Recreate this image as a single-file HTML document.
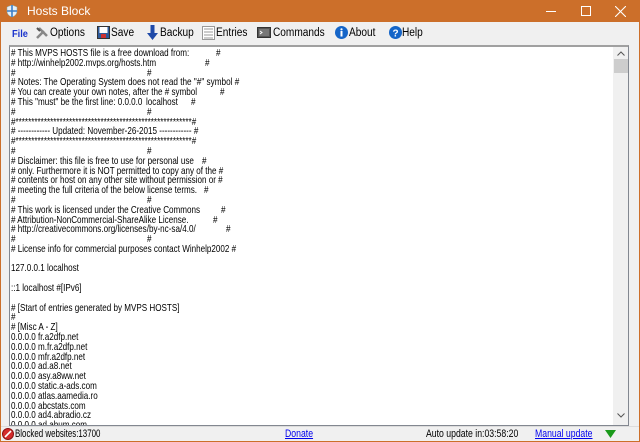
<!DOCTYPE html>
<html><head><meta charset="utf-8"><style>
*{margin:0;padding:0;box-sizing:border-box}
body{width:640px;height:442px;overflow:hidden;background:#f0f0f0;font-family:"Liberation Sans",Arial,sans-serif;position:relative}
.abs{position:absolute}
#title{left:0;top:0;width:640px;height:22px;background:#cc6f2a}
#frame{left:0;top:22px;width:640px;height:420px;border-left:1px solid #cc6f2a;border-right:1px solid #cc6f2a;border-bottom:1px solid #cc6f2a}
.menu{top:26px;font-size:11.5px;color:#000;line-height:14px;transform:scaleX(0.88);transform-origin:0 0;white-space:nowrap}
#ta{left:9px;top:45px;width:620px;height:381px;background:#fff;border:1px solid #828790;border-top:2px solid #a0a0a0;overflow:hidden}
.ln{position:absolute;left:1px;font-size:10.5px;line-height:10px;white-space:pre;transform:scaleX(0.77);transform-origin:0 0;color:#000}
.h{position:absolute;font-size:10.5px;line-height:10px;white-space:pre;transform:scaleX(0.77);transform-origin:0 0}
#sb{left:603px;top:0;width:16px;height:379px;background:#f0f0f0}
.st{top:428px;font-size:11px;line-height:13px;transform:scaleX(0.79);transform-origin:0 0;white-space:nowrap}
</style></head><body>
<div id="title" class="abs">
 <svg class="abs" style="left:5px;top:4px" width="14" height="14" viewBox="0 0 14 14"><path d="M7 1 L12 3 V7 C12 10 10 12 7 13 C4 12 2 10 2 7 V3 Z" fill="#e8eef5" stroke="#8aa" stroke-width=".5"/><path d="M7 1 V13 M2 7 H12" stroke="#3a7fc8" stroke-width="1.6"/></svg>
 <div class="abs" style="left:27px;top:4px;color:#fff;font-size:12px">Hosts Block</div>
 <div class="abs" style="left:546px;top:11px;width:10px;height:1px;background:#fff"></div>
 <div class="abs" style="left:581px;top:6px;width:10px;height:10px;border:1px solid #fff"></div>
 <svg class="abs" style="left:615px;top:6px" width="11" height="11"><path d="M0 0L11 11M11 0L0 11" stroke="#fff" stroke-width="1.1"/></svg>
</div>
<div id="frame" class="abs"></div>
<div class="abs menu" style="left:12px;color:#1a33cc;font-weight:bold;font-size:10.5px;top:27px">File</div>
<svg class="abs" style="left:35px;top:26px" width="14" height="14"><path d="M2 12L9 5M4 2L12 10" stroke="#888" stroke-width="2.5"/><path d="M2 2L5 5" stroke="#555" stroke-width="2"/></svg>
<div class="abs menu" style="left:50px">Options</div>
<svg class="abs" style="left:97px;top:26px" width="13" height="13"><rect x=".5" y=".5" width="12" height="12" fill="#2d5b9c" stroke="#333"/><rect x="2.5" y="1" width="8" height="6" fill="#fff"/><rect x="4" y="8" width="5" height="4" fill="#c33"/></svg>
<div class="abs menu" style="left:111px">Save</div>
<svg class="abs" style="left:147px;top:25px" width="11" height="15"><rect x="3.5" y="0" width="4" height="9" fill="#1f4aa8"/><path d="M0 8H11L5.5 15Z" fill="#1f4aa8"/></svg>
<div class="abs menu" style="left:160px">Backup</div>
<svg class="abs" style="left:202px;top:26px" width="13" height="14"><rect x=".5" y=".5" width="12" height="13" fill="#fff" stroke="#999"/><path d="M2 3H11M2 6H11M2 9H11M2 12H11" stroke="#999"/></svg>
<div class="abs menu" style="left:216px">Entries</div>
<svg class="abs" style="left:257px;top:27px" width="14" height="11"><rect x=".5" y=".5" width="13" height="10" fill="#555" stroke="#333"/><rect x="2" y="2" width="10" height="7" fill="#777"/><path d="M3 4l2 1.5L3 7" stroke="#fff" fill="none"/></svg>
<div class="abs menu" style="left:273px">Commands</div>
<svg class="abs" style="left:335px;top:26px" width="13" height="13"><circle cx="6.5" cy="6.5" r="6.5" fill="#1565c8"/><rect x="5.5" y="5" width="2" height="5.5" fill="#fff"/><circle cx="6.5" cy="3.3" r="1.1" fill="#fff"/></svg>
<div class="abs menu" style="left:349px">About</div>
<svg class="abs" style="left:389px;top:26px" width="13" height="13"><circle cx="6.5" cy="6.5" r="6.5" fill="#1565c8"/><text x="6.5" y="10.5" font-size="10" font-weight="bold" fill="#fff" text-anchor="middle" font-family="Liberation Sans">?</text></svg>
<div class="abs menu" style="left:402px">Help</div>

<div id="ta" class="abs">
<div id="sb" class="abs">
 <svg class="abs" style="left:4px;top:4px" width="8" height="5"><path d="M0.5 4.5L4 1L7.5 4.5" stroke="#555" fill="none"/></svg>
 <div class="abs" style="left:1px;top:12px;width:14px;height:14px;background:#cdcdcd"></div>
 <svg class="abs" style="left:4px;top:366px" width="8" height="5"><path d="M0.5 0.5L4 4L7.5 0.5" stroke="#555" fill="none"/></svg>
</div>
<div class="ln" style="top:1px"># This MVPS HOSTS file is a free download from:</div><div class="h" style="left:206px;top:1px">#</div>
<div class="ln" style="top:11px"># http://winhelp2002.mvps.org/hosts.htm</div><div class="h" style="left:195px;top:11px">#</div>
<div class="ln" style="top:21px">#</div><div class="h" style="left:137px;top:21px">#</div>
<div class="ln" style="top:30px;transform:scaleX(0.78)"># Notes: The Operating System does not read the "#" symbol #</div>
<div class="ln" style="top:40px"># You can create your own notes, after the # symbol</div><div class="h" style="left:210px;top:40px">#</div>
<div class="ln" style="top:50px;transform:scaleX(0.77)"># This "must" be the first line: 0.0.0.0</div><div class="h" style="left:136px;top:50px">localhost</div><div class="h" style="left:181px;top:50px">#</div>
<div class="ln" style="top:60px">#</div><div class="h" style="left:137px;top:60px">#</div>
<div class="ln" style="top:70px">#********************************************************#</div>
<div class="ln" style="top:79px"># ------------ Updated: November-26-2015 ------------ #</div>
<div class="ln" style="top:89px">#********************************************************#</div>
<div class="ln" style="top:99px">#</div><div class="h" style="left:137px;top:99px">#</div>
<div class="ln" style="top:109px"># Disclaimer: this file is free to use for personal use</div><div class="h" style="left:192px;top:109px">#</div>
<div class="ln" style="top:119px"># only. Furthermore it is NOT permitted to copy any of the #</div>
<div class="ln" style="top:128px"># contents or host on any other site without permission or #</div>
<div class="ln" style="top:138px"># meeting the full criteria of the below license terms.</div><div class="h" style="left:194px;top:138px">#</div>
<div class="ln" style="top:148px">#</div><div class="h" style="left:137px;top:148px">#</div>
<div class="ln" style="top:158px"># This work is licensed under the Creative Commons</div><div class="h" style="left:211px;top:158px">#</div>
<div class="ln" style="top:168px"># Attribution-NonCommercial-ShareAlike License.</div><div class="h" style="left:203px;top:168px">#</div>
<div class="ln" style="top:177px"># http://creativecommons.org/licenses/by-nc-sa/4.0/</div><div class="h" style="left:216px;top:177px">#</div>
<div class="ln" style="top:187px">#</div><div class="h" style="left:137px;top:187px">#</div>
<div class="ln" style="top:197px"># License info for commercial purposes contact Winhelp2002 #</div>
<div class="ln" style="top:216px">127.0.0.1 localhost</div>
<div class="ln" style="top:236px">::1 localhost #[IPv6]</div>
<div class="ln" style="top:256px"># [Start of entries generated by MVPS HOSTS]</div>
<div class="ln" style="top:265px">#</div>
<div class="ln" style="top:275px"># [Misc A - Z]</div>
<div class="ln" style="top:285px">0.0.0.0 fr.a2dfp.net</div>
<div class="ln" style="top:295px">0.0.0.0 m.fr.a2dfp.net</div>
<div class="ln" style="top:305px">0.0.0.0 mfr.a2dfp.net</div>
<div class="ln" style="top:314px">0.0.0.0 ad.a8.net</div>
<div class="ln" style="top:324px">0.0.0.0 asy.a8ww.net</div>
<div class="ln" style="top:334px">0.0.0.0 static.a-ads.com</div>
<div class="ln" style="top:344px">0.0.0.0 atlas.aamedia.ro</div>
<div class="ln" style="top:354px">0.0.0.0 abcstats.com</div>
<div class="ln" style="top:363px">0.0.0.0 ad4.abradio.cz</div>
<div class="ln" style="top:373px">0.0.0.0 ad.abum.com</div>
</div>

<div class="abs" style="left:1px;top:426px;width:638px;height:1px;background:#dcdcdc"></div>
<svg class="abs" style="left:2px;top:428px" width="12" height="12"><circle cx="6" cy="6" r="5.5" fill="#d42b2b" stroke="#8a1010"/><path d="M3 9L9 3" stroke="#fff" stroke-width="1.6"/></svg>
<div class="abs st" style="left:15px;transform:scaleX(0.72)">Blocked websites:13700</div>
<div class="abs st" style="left:285px;color:#0000ee;text-decoration:underline">Donate</div>
<div class="abs st" style="left:426px">Auto update in:03:58:20</div>
<div class="abs st" style="left:535px;color:#0000ee;text-decoration:underline">Manual update</div>
<svg class="abs" style="left:605px;top:430px" width="11" height="8"><path d="M0 0H11L5.5 8Z" fill="#1a9a1a"/></svg>
</body></html>
